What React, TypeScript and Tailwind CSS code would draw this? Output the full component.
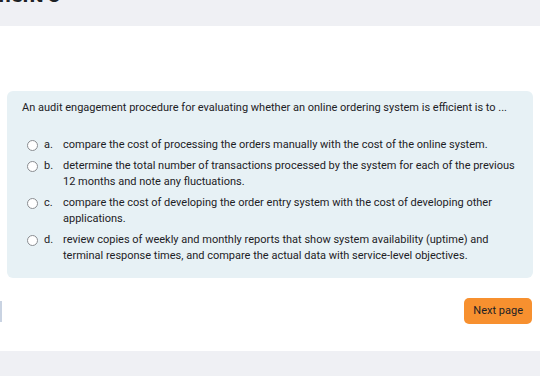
import React from "react";

type Option = {
  letter: string;
  text: string;
};

const options: Option[] = [
  { letter: "a.", text: "compare the cost of processing the orders manually with the cost of the online system." },
  { letter: "b.", text: "determine the total number of transactions processed by the system for each of the previous 12 months and note any fluctuations." },
  { letter: "c.", text: "compare the cost of developing the order entry system with the cost of developing other applications." },
  { letter: "d.", text: "review copies of weekly and monthly reports that show system availability (uptime) and terminal response times, and compare the actual data with service-level objectives." },
];

function Radio() {
  return (
    <span className="mt-[3px] w-[11px] h-[11px] shrink-0 rounded-full border border-[#8a8d91] bg-white" />
  );
}

export default function App() {
  return (
    <div
      className="w-[540px] h-[376px] overflow-hidden bg-white text-[#1d2125] flex flex-col"
      style={{ fontFamily: "Roboto, 'Liberation Sans', sans-serif" }}
    >
      <div className="h-[26px] bg-[#eff0f4] overflow-hidden shrink-0">
        <h2 className="-mt-[16px] -ml-[80px] text-[22px] font-bold leading-[22px] whitespace-nowrap">Assessment 3</h2>
      </div>

      <div className="pt-[65px] px-[7px]">
        <div className="bg-[#e7f1f5] rounded-[6px] pl-[15px] pr-[10px] pt-[9px] pb-[14px]">
          <p className="text-[11px] leading-[16px]">
            An audit engagement procedure for evaluating whether an online ordering system is efficient is to ...
          </p>
          <div className="mt-[21px] flex flex-col gap-[5px]">
            {options.map((o) => (
              <div key={o.letter} className="flex items-start pl-[5px] text-[11px] leading-[16px]">
                <Radio />
                <span className="w-[19px] shrink-0 ml-[6px]">{o.letter}</span>
                <span className="pr-[6px]">{o.text}</span>
              </div>
            ))}
          </div>
        </div>
      </div>

      <div className="mt-[20px] flex items-center justify-between h-[26px]">
        <div className="w-[2px] h-[21px] bg-[#c9d3e2]" />
        <button className="mr-[8px] h-[26px] px-[9px] rounded-[5px] bg-[#f7902f] text-[#1d2125] text-[11px]">
          Next page
        </button>
      </div>

      <div className="mt-auto h-[25px] bg-[#eff0f4]" />
    </div>
  );
}
